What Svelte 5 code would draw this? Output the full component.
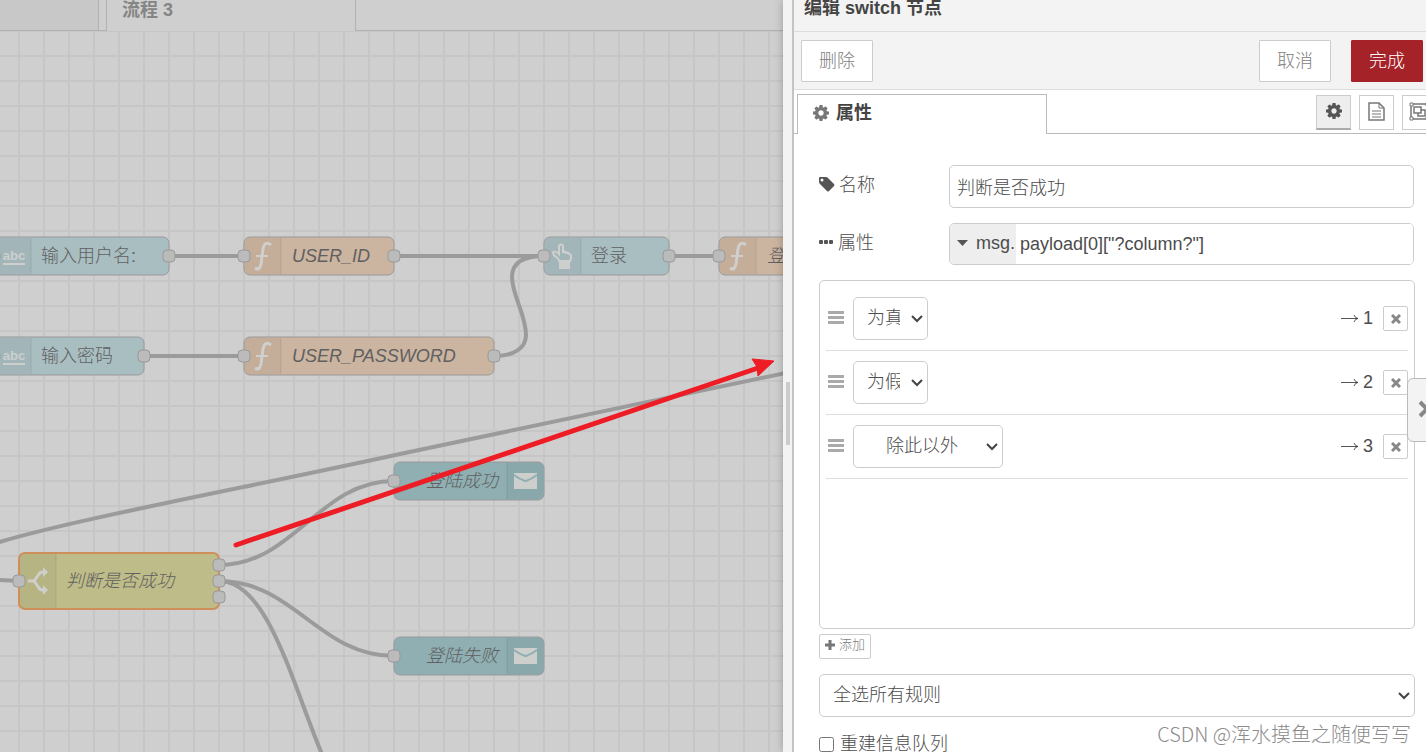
<script lang="ts">
  type FlowNode = {
    type: string;
    label: string;
    x: number;
    y: number;
    w: number;
    h: number;
    input: boolean;
    outputs: number[];
  };

  // x is the left edge, y is the vertical centre of the node
  const nodes: FlowNode[] = [
    { type: 'text', label: '输入用户名:', x: -6, y: 225, w: 175, h: 38, input: true, outputs: [0] },
    { type: 'text', label: '输入密码', x: -6, y: 325, w: 150, h: 38, input: true, outputs: [0] },
    { type: 'function', label: 'USER_ID', x: 244, y: 225, w: 150, h: 38, input: true, outputs: [0] },
    { type: 'function', label: 'USER_PASSWORD', x: 244, y: 325, w: 250, h: 38, input: true, outputs: [0] },
    { type: 'button', label: '登录', x: 544, y: 225, w: 125, h: 38, input: true, outputs: [0] },
    { type: 'function', label: '登录', x: 719, y: 225, w: 150, h: 38, input: true, outputs: [] },
    { type: 'switch', label: '判断是否成功', x: 19, y: 550, w: 200, h: 56, input: true, outputs: [-16, 0, 16] },
    { type: 'toast', label: '登陆成功', x: 394, y: 450, w: 150, h: 38, input: true, outputs: [] },
    { type: 'toast', label: '登陆失败', x: 394, y: 625, w: 150, h: 38, input: true, outputs: [] }
  ];

  const wires = [
    'M169 225H244',
    'M144 325H244',
    'M394 225H544',
    'M494 325C514 325 526 317 526 304C526 284 512 264 512 246C512 231 524 225 544 225',
    'M669 225H719',
    'M-20 548L19 550',
    'M-10 514C60 491 240 458 400 423L800 339',
    'M219 534C294 534 319 450 394 450',
    'M219 550C294 550 319 625 394 625',
    'M219 550C296 550 310 800 390 800'
  ];

  let name = '判断是否成功';
  let property = 'payload[0]["?column?"]';
  let rules = [
    { id: 1, label: '为真', wide: false },
    { id: 2, label: '为假', wide: false },
    { id: 3, label: '除此以外', wide: true }
  ];
  let recreate = false;

  function removeRule(id: number) {
    rules = rules.filter((r) => r.id !== id);
  }

  function addRule() {
    const next = Math.max(0, ...rules.map((r) => r.id)) + 1;
    rules = [...rules, { id: next, label: '为真', wide: false }];
  }
</script>

<svelte:head>
  <title>Node-RED</title>
</svelte:head>

<svg width="0" height="0" class="defs" aria-hidden="true">
  <symbol id="cog" viewBox="0 -128 1536 1536">
    <path d="M1024 640q0-106-75-181t-181-75-181 75-75 181 75 181 181 75 181-75 75-181zm512-109v222q0 12-8 23t-20 13l-185 28q-19 54-39 91 35 50 107 138 10 12 10 25t-9 23q-27 37-99 108t-94 71q-12 0-26-9l-138-108q-44 23-91 38-16 136-29 186-7 28-36 28h-222q-14 0-24.5-8.5t-11.5-21.5l-28-184q-49-16-90-37l-141 107q-10 9-25 9-14 0-25-11-126-114-165-168-7-10-7-23 0-12 8-23 15-21 51-66.5t54-70.5q-27-50-41-99l-183-27q-13-2-21-12.5t-8-23.5v-222q0-12 8-23t19-13l186-28q14-46 39-92-40-57-107-138-10-12-10-24 0-10 9-23 26-36 98.5-107.5t94.5-71.5q13 0 26 10l138 107q44-23 91-38 16-136 29-186 7-28 36-28h222q14 0 24.5 8.5t11.5 21.5l28 184q49 16 90 37l142-107q9-9 24-9 13 0 25 10 129 119 165 170 7 8 7 22 0 12-8 23-15 21-51 66.5t-54 70.5q26 50 41 98l183 28q13 2 21 12.5t8 23.5z" />
  </symbol>
</svg>

<div class="editor">
  <main class="workspace">
    <nav class="tabs">
      <a href="#flow2" class="flow-tab" aria-label="流程 2"></a>
      <a href="#flow3" class="flow-tab active">流程 3</a>
    </nav>
    <svg class="canvas">
      <defs>
        <pattern id="grid" x="19" y="0" width="25" height="25" patternUnits="userSpaceOnUse">
          <path d="M0 0V25M25 0V25M0 0H25M0 25H25" stroke="#c6c6c6" stroke-width="2" />
        </pattern>
      </defs>
      <rect width="100%" height="100%" fill="url(#grid)" />

      {#each wires as d}
        <path class="wire" {d} />
      {/each}

      {#each nodes as node}
        <g transform="translate({node.x} {node.y})" class={node.type}>
          <rect class="body" y={-node.h / 2} width={node.w} height={node.h} rx="6" />
          {#if node.type === 'toast'}
            <path class="shade" d="M113 -18H144Q149 -18 149 -13V13Q149 18 144 18H113Z" />
            <path class="divider" d="M113 -18V18" />
            <g transform="translate(131 0)">
              <rect class="icon-fill" x="-11" y="-8" width="23" height="16" />
              <path class="flap" d="M-11 -6C-7 -3 -3 -1 0 0H1C4 -1 8 -3 12 -6" />
            </g>
            <text x="104" y="6" text-anchor="end">{node.label}</text>
          {:else}
            <path class="shade" d="M37 {1 - node.h / 2}H6Q1 {1 - node.h / 2} 1 {6 - node.h / 2}V{node.h / 2 - 6}Q1 {node.h / 2 - 1} 6 {node.h / 2 - 1}H37Z" />
            <path class="divider" d="M37 {1 - node.h / 2}V{node.h / 2 - 1}" />
            <g transform="translate(18 0)">
              {#if node.type === 'text'}
                <text class="abc" x="2" y="4" text-anchor="middle">abc</text>
                <rect class="icon-fill" x="-9" y="7" width="22" height="2" />
              {:else if node.type === 'function'}
                <path class="icon-line" d="M9 -11C5 -14 2 -13 1 -7L-1 8C-2 13 -4 14 -7 12" />
                <path class="icon-line thin" d="M-6 0H6" />
              {:else if node.type === 'button'}
                <path class="icon-line thin" d="M-3 4C-4 1 -9 0 -9 -3C-9 -5 -6 -5 -3 -2V-9.500a2 2 0 0 1 4 0V-4q2 -1 3 1q2 -1 3 1q2 0 2 2v2q0 1 -1 3H-3z" />
                <rect class="icon-fill" x="-3" y="6" width="11" height="7" />
              {:else}
                <path class="icon-line" d="M-9 0H-3L2 -7Q3 -9 6 -9M-3 0L2 7Q3 9 6 9" />
                <path class="icon-fill" d="M6 -14L11 -9L6 -4ZM6 14L11 9L6 4Z" />
              {/if}
            </g>
            <text x={node.type === 'function' ? 48 : 47} y="6">{node.label}</text>
          {/if}
          {#if node.input}
            <rect class="port" x="-6" y="-6" width="12" height="12" rx="4" />
          {/if}
          {#each node.outputs as oy}
            <rect class="port" x={node.w - 6} y={oy - 6} width="12" height="12" rx="4" />
          {/each}
        </g>
      {/each}

      <!-- annotation arrow -->
      <path class="arrow-line" d="M236 514L758 337" />
      <path class="arrow-head" d="M774 330L752 328L757 336L758 345Z" />
    </svg>
  </main>

  <div class="resizer"><span class="grip"></span></div>

  <section class="tray">
    <h1>编辑 switch 节点</h1>
    <div class="toolbar">
      <button type="button">删除</button>
      <span class="spacer"></span>
      <button type="button">取消</button>
      <button type="button" class="primary">完成</button>
    </div>

    <div class="tray-tabs">
      <a href="#properties" class="tray-tab">
        <svg width="16" height="16" fill="#777"><use href="#cog" /></svg>
        属性
      </a>
      <div class="tab-buttons">
        <button type="button" class="selected" aria-label="属性">
          <svg width="16" height="16" fill="#555"><use href="#cog" /></svg>
        </button>
        <button type="button" aria-label="描述">
          <svg width="17" height="19" viewBox="0 0 17 19" fill="none" stroke="#777">
            <path d="M1 1H11L16 6V18H1Z" stroke-width="1.500" />
            <path d="M11 1V6H16M4 9H13M4 12H13M4 15H13" />
          </svg>
        </button>
        <button type="button" aria-label="外观">
          <svg width="21" height="19" viewBox="0 0 21 19" fill="none" stroke="#777">
            <path d="M2 2H19V17H2Z" stroke-width="1.500" />
            <path d="M5 5H12V11H5ZM12 8H16V14H9V11" stroke-width="1.500" />
            <path d="M1 1H4V4H1ZM17 1H20V4H17ZM1 15H4V18H1ZM17 15H20V18H17Z" fill="#fff" />
          </svg>
        </button>
      </div>
    </div>

    <form on:submit|preventDefault>
      <div class="row">
        <label for="node-name">
          <svg width="16" height="16" viewBox="0 0 16 16" fill="#555">
            <path fill-rule="evenodd" d="M1 0H7Q8 0 9 1L15 7Q16 8 15 9L10 14Q9 15 8 14L1 7Q0 6 0 5V1Q0 0 1 0ZM3 1.500A1.500 1.500 0 1 0 3 4.500A1.500 1.500 0 1 0 3 1.500Z" />
          </svg>
          名称
        </label>
        <input id="node-name" class="box" type="text" bind:value={name} />
      </div>
      <div class="row">
        <label for="node-property">
          <svg width="15" height="16" viewBox="0 0 15 16" fill="#555">
            <rect x="0" y="5" width="4" height="4" rx="1" />
            <rect x="5" y="5" width="4" height="4" rx="1" />
            <rect x="10" y="5" width="4" height="4" rx="1" />
          </svg>
          属性
        </label>
        <div class="box typed-input">
          <button type="button" class="type">
            <svg width="11" height="6" viewBox="0 0 11 6" fill="#555"><path d="M0 0H11L5.500 6Z" /></svg>
            msg.
          </button>
          <input id="node-property" type="text" bind:value={property} />
        </div>
      </div>

      <ol class="rules">
        {#each rules as rule, i (rule.id)}
          <li>
            <svg class="handle" width="16" height="14" viewBox="0 0 16 14" fill="#aaa">
              <path d="M0 0H16V3H0ZM0 5H16V8H0ZM0 10H16V13H0Z" />
            </svg>
            <select class="box" class:wide={rule.wide} aria-label="规则 {i + 1}">
              <option>{rule.label}</option>
            </select>
            <span class="spacer"></span>
            <span class="output">
              <svg width="18" height="8" viewBox="0 0 18 8" fill="none" stroke="#555">
                <path d="M0 4.500H17M13 1Q14 4 17 4.500Q14 5 13 8" />
              </svg>
              {i + 1}
            </span>
            <button type="button" class="small remove" aria-label="删除规则 {i + 1}" on:click={() => removeRule(rule.id)}>
              <svg width="10" height="10" viewBox="0 0 10 10" stroke="#888" stroke-width="3">
                <path d="M1 1L9 9M9 1L1 9" />
              </svg>
            </button>
          </li>
        {/each}
      </ol>
      <button type="button" class="small add" on:click={addRule}>
        <svg width="10" height="10" viewBox="0 0 10 10" stroke="#777" stroke-width="3"><path d="M0 5H10M5 0V10" /></svg>
        添加
      </button>

      <select class="box check-all" aria-label="规则匹配方式">
        <option>全选所有规则</option>
        <option>接受第一条匹配消息后停止</option>
      </select>
      <div class="recreate">
        <input id="recreate" type="checkbox" bind:checked={recreate} />
        <label for="recreate">重建信息队列</label>
      </div>
    </form>
  </section>

  <button type="button" class="collapse" aria-label="收起侧边栏">
    <svg width="14" height="18" viewBox="0 0 14 18" fill="none" stroke="#888" stroke-width="4"><path d="M3 2L10 9L3 16" /></svg>
  </button>
  <div class="watermark">CSDN @浑水摸鱼之随便写写</div>
</div>

<style>
  :global(body) {
    margin: 0;
    overflow: hidden;
  }

  .defs {
    position: absolute;
  }

  .editor {
    position: relative;
    display: flex;
    height: 100vh;
    overflow: hidden;
    font-family: "Liberation Sans", "Noto Sans CJK SC", sans-serif;
    font-size: 18px;
    font-weight: 300;
    line-height: 24px;
    color: #4c4c4c;
  }
  .editor * {
    box-sizing: border-box;
  }
  button,
  input,
  select {
    font: inherit;
    color: inherit;
    margin: 0;
  }
  .spacer {
    flex: 1;
  }

  /* workspace */
  .workspace {
    flex: 1;
    min-width: 0;
    display: flex;
    flex-direction: column;
    background: #cfcfcf;
  }
  .tabs {
    display: flex;
    gap: 7px;
    height: 31px;
    border-bottom: 1px solid #b2b2b2;
  }
  .flow-tab {
    width: 99px;
    height: 30px;
    background: #c8c8c8;
    border-right: 1px solid #b2b2b2;
    color: #858585;
    font-weight: 700;
    line-height: 20px;
    text-decoration: none;
  }
  .flow-tab.active {
    width: 250px;
    height: 31px;
    padding-left: 15px;
    background: #cfcfcf;
    border-left: 1px solid #b2b2b2;
  }
  .canvas {
    flex: 1;
    width: 100%;
    min-height: 0;
    display: block;
  }
  .wire {
    fill: none;
    stroke: #9b9b9b;
    stroke-width: 4;
  }
  .body {
    stroke: #999;
  }
  .text .body,
  .button .body {
    fill: #a9bec1;
  }
  .function .body {
    fill: #ccb5a0;
  }
  .switch .body {
    fill: #bebc88;
    stroke: #cf8f5b;
    stroke-width: 2;
  }
  .toast .body {
    fill: #8fafb2;
  }
  .shade {
    fill: rgba(0, 0, 0, 0.04);
  }
  .divider {
    stroke: rgba(0, 0, 0, 0.08);
  }
  .port {
    fill: #bbb;
    stroke: #999;
  }
  .canvas text {
    fill: #606060;
  }
  .function text,
  .switch text,
  .toast text {
    font-style: italic;
  }
  .canvas .abc {
    fill: #cccfcf;
    font-size: 13px;
    font-weight: 700;
  }
  .icon-fill {
    fill: #cdcfcd;
  }
  .icon-line {
    fill: none;
    stroke: #cfcfcd;
    stroke-width: 3;
  }
  .icon-line.thin {
    stroke-width: 2;
  }
  .flap {
    fill: none;
    stroke: #8fafb2;
    stroke-width: 2;
  }
  .arrow-line {
    stroke: #ee1c24;
    stroke-width: 5;
    stroke-linecap: round;
  }
  .arrow-head {
    fill: #ee1c24;
    stroke: #ee1c24;
  }

  .resizer {
    position: relative;
    flex: 0 0 11px;
    display: flex;
    align-items: center;
    justify-content: center;
    padding-top: 74px;
    background: #f3f3f3;
    border-right: 2px solid #c4c4c4;
    box-shadow: 0 0 8px rgba(0, 0, 0, 0.25);
  }
  .grip {
    width: 4px;
    height: 63px;
    background: #ccc;
  }

  /* edit tray */
  .tray {
    position: relative;
    flex: 0 0 632px;
    display: flex;
    flex-direction: column;
    background: #fff;
    overflow: hidden;
  }
  h1 {
    margin: 0;
    padding: 0 10px 15px;
    background: #f3f3f3;
    border-bottom: 1px solid #ddd;
    font-size: 18px;
    font-weight: 700;
    line-height: 16px;
    color: #444;
  }
  .toolbar {
    display: flex;
    gap: 20px;
    padding: 8px 3px 7px 7px;
    background: #f3f3f3;
    border-bottom: 1px solid #ddd;
  }
  .toolbar .spacer {
    margin: 0 -20px;
  }
  .toolbar button {
    width: 72px;
    height: 42px;
    padding: 0;
    background: #fff;
    border: 1px solid #ccc;
    border-radius: 1px;
    color: #808080;
  }
  .toolbar .primary {
    background: #a52228;
    border-color: #a52228;
    color: #fff;
  }
  .tray-tabs {
    display: flex;
    justify-content: space-between;
    height: 44px;
    padding: 4px 0 0 3px;
    border-bottom: 1px solid #bbb;
  }
  .tray-tab {
    display: flex;
    align-items: center;
    gap: 7px;
    width: 250px;
    height: 40px;
    padding: 0 15px 3px;
    background: #fff;
    border: 1px solid #bbb;
    border-bottom: 0;
    color: #444;
    font-weight: 700;
    text-decoration: none;
  }
  .tab-buttons {
    display: flex;
    gap: 8px;
    margin-right: -11px;
    padding-top: 1px;
  }
  .tab-buttons button {
    display: flex;
    align-items: center;
    justify-content: center;
    width: 35px;
    height: 35px;
    padding: 0 0 2px;
    background: #fff;
    border: 1px solid #ccc;
  }
  .tab-buttons .selected {
    background: #eee;
    border-bottom: 2px solid #aaa;
  }

  form {
    display: flex;
    flex-direction: column;
    padding: 31px 11px 0 25px;
  }
  .row {
    display: flex;
    margin-bottom: 15px;
    padding-right: 1px;
  }
  .row label {
    display: flex;
    align-items: center;
    gap: 4px;
    width: 130px;
    height: 39px;
  }
  .box {
    height: 43px;
    background: #fff;
    border: 1px solid #ccc;
    border-radius: 5px;
  }
  select.box {
    appearance: none;
    padding: 0 27px 2px 13px;
    background: #fff url("data:image/svg+xml,%3Csvg xmlns='http://www.w3.org/2000/svg' width='12' height='8' fill='none' stroke='%23444' stroke-width='2'%3E%3Cpath d='M1 1L6 6L11 1'/%3E%3C/svg%3E") no-repeat right 4px center;
  }
  input.box {
    flex: 1;
    min-width: 0;
    padding: 0 7px 2px;
  }
  .typed-input {
    flex: 1;
    display: flex;
    height: 42px;
    overflow: hidden;
  }
  .typed-input input {
    flex: 1;
    min-width: 0;
    padding: 0 4px 1px;
    border: 0;
  }
  .type {
    display: flex;
    align-items: center;
    gap: 8px;
    width: 66px;
    padding: 0 0 2px 7px;
    background: #eee;
    border: 0;
  }
  .rules {
    height: 349px;
    margin: 0 0 5px;
    padding: 6px;
    border: 1px solid #ccc;
    border-radius: 5px;
    list-style: none;
  }
  .rules li {
    display: flex;
    align-items: center;
    padding: 10px 0;
    border-bottom: 1px solid #ddd;
  }
  .handle {
    margin: 0 9px 2px 2px;
  }
  .rules select {
    width: 75px;
  }
  .rules select.wide {
    width: 150px;
    padding-left: 32px;
  }
  .output {
    display: flex;
    align-items: center;
    gap: 4px;
    margin-right: 10px;
    padding-bottom: 2px;
  }
  .small {
    display: flex;
    align-items: center;
    justify-content: center;
    height: 25px;
    padding: 0;
    background: #fff;
    border: 1px solid #ccc;
    border-radius: 2px;
  }
  .remove {
    width: 25px;
  }
  .add {
    gap: 4px;
    width: 52px;
    padding-bottom: 3px;
    font-size: 13px;
    color: #808080;
  }
  .check-all {
    width: 100%;
    margin: 15px 0;
  }
  .recreate {
    display: flex;
    align-items: center;
    gap: 6px;
  }
  .recreate input {
    width: 15px;
    height: 15px;
  }

  /* lies over the tray's right edge */
  .collapse {
    position: absolute;
    top: 378px;
    right: -6px;
    width: 25px;
    height: 64px;
    padding: 0 0 2px 9px;
    background: #f3f3f3;
    border: 1px solid #bbb;
    border-radius: 6px;
  }
  .collapse svg {
    display: block;
  }
  .watermark {
    position: absolute;
    right: 15px;
    bottom: 6px;
    font-family: "Noto Sans CJK SC", sans-serif;
    font-size: 20px;
    color: #8c8c8c;
    text-shadow: 1px 1px 0 #fff;
  }
</style>
